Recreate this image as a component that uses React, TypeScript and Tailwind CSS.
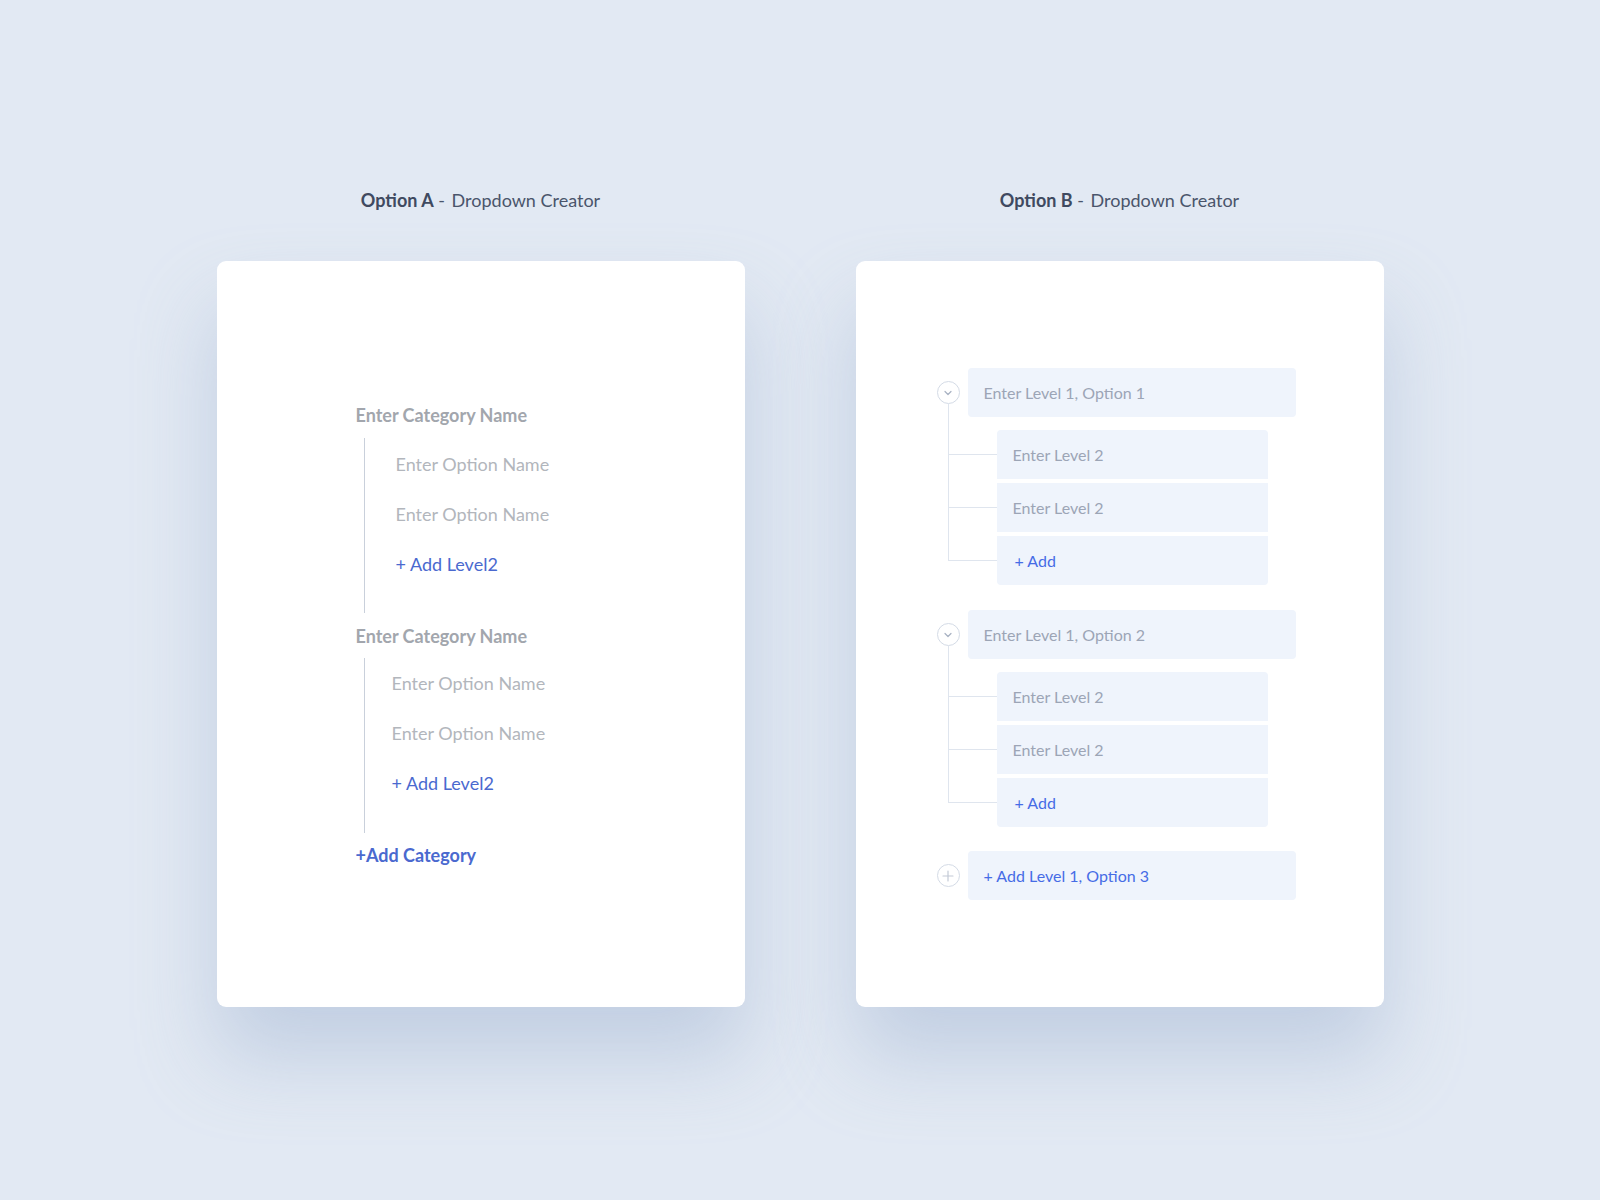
import React from "react";

const font = { fontFamily: "Lato, 'Open Sans', sans-serif" };

function Title({ label }: { label: string }) {
  return (
    <h2 className="h-[22px] text-[18px] leading-[22px] text-[#4a556b] whitespace-pre">
      <span className="font-bold text-[#3f4a60]">{label}</span>
      <span>{" - "}</span>
      <span className="pl-[2px]">Dropdown Creator</span>
    </h2>
  );
}

function Category({
  lineGap,
  padTop,
  indent,
}: {
  lineGap: string;
  padTop: string;
  indent: string;
}) {
  return (
    <div>
      <div className="h-[24px] text-[18px] font-bold leading-[24px] text-[#a2a6ad]">
        Enter Category Name
      </div>
      <div
        className={`ml-[8px] flex h-[175px] flex-col border-l border-[#c9d0db] ${lineGap} ${padTop} ${indent}`}
      >
        <div className="flex h-[50px] items-center text-[18px] text-[#b2b6bc]">Enter Option Name</div>
        <div className="flex h-[50px] items-center text-[18px] text-[#b2b6bc]">Enter Option Name</div>
        <div className="flex h-[50px] items-center text-[18px] text-[#4a69cf]">+ Add Level2</div>
      </div>
    </div>
  );
}

function Chevron() {
  return (
    <svg width="10" height="10" viewBox="0 0 10 10" fill="none">
      <path d="M2 3.5 L5 6.5 L8 3.5" stroke="#a7b1c2" strokeWidth="1.2" strokeLinecap="round" strokeLinejoin="round" />
    </svg>
  );
}

function Plus() {
  return (
    <svg width="12" height="12" viewBox="0 0 12 12" fill="none">
      <path d="M6 1 V11 M1 6 H11" stroke="#c3cad6" strokeWidth="1.2" strokeLinecap="round" />
    </svg>
  );
}

function Circle({ children }: { children: React.ReactNode }) {
  return (
    <div className="flex h-[23px] w-[23px] shrink-0 items-center justify-center rounded-full border border-[#d4dbe6] bg-white">
      {children}
    </div>
  );
}

function LevelOne({ option }: { option: number }) {
  return (
    <div className="relative">
      <div className="flex items-center gap-[8px]">
        <Circle>
          <Chevron />
        </Circle>
        <div className="flex h-[49px] w-[328px] items-center rounded-[4px] bg-[#eff4fc] pl-[16px] text-[16px] text-[#9ca5b6]">
          Enter Level 1, Option {option}
        </div>
      </div>
      {/* tree trunk from the toggle down to the last branch */}
      <div className="absolute left-[11px] top-[36px] bottom-[25px] w-px bg-[#dfe5ee]" />
      <div className="mt-[13px] flex flex-col gap-[4px]">
        <div className="flex items-center">
          <div className="ml-[11px] h-px w-[49px] bg-[#dfe5ee]" />
          <div className="flex h-[49px] w-[271px] items-center rounded-t-[4px] bg-[#eff4fc] pl-[16px] text-[16px] text-[#9ca5b6]">
            Enter Level 2
          </div>
        </div>
        <div className="flex items-center">
          <div className="ml-[11px] h-px w-[49px] bg-[#dfe5ee]" />
          <div className="flex h-[49px] w-[271px] items-center bg-[#eff4fc] pl-[16px] text-[16px] text-[#9ca5b6]">
            Enter Level 2
          </div>
        </div>
        <div className="flex items-center">
          <div className="ml-[11px] h-px w-[49px] bg-[#dfe5ee]" />
          <div className="flex h-[49px] w-[271px] items-center rounded-b-[4px] bg-[#eff4fc] pl-[18px] text-[16px] text-[#466ce6]">
            + Add
          </div>
        </div>
      </div>
    </div>
  );
}

export default function App() {
  return (
    <div className="min-h-[1200px] w-full bg-[#e2e9f3] pt-[189px]" style={font}>
      <div className="flex justify-center gap-[111px]">
        {/* Option A */}
        <div className="flex w-[528px] flex-col items-center">
          <Title label="Option A" />
          <div className="mt-[50px] h-[746px] w-[528px] rounded-[9px] bg-white pl-[139px] pt-[142px] shadow-[0_50px_80px_rgba(155,175,206,0.45)]">
            <Category lineGap="mt-[11px]" padTop="pt-[1px]" indent="pl-[31px]" />
            <div className="mt-[11px]">
              <Category lineGap="mt-[10px]" padTop="pt-[0px]" indent="pl-[27px]" />
            </div>
            <div className="mt-[10px] h-[24px] text-[18px] font-bold leading-[24px] text-[#4a69cf]">
              +Add Category
            </div>
          </div>
        </div>

        {/* Option B */}
        <div className="flex w-[528px] flex-col items-center">
          <Title label="Option B" />
          <div className="mt-[50px] h-[746px] w-[528px] rounded-[9px] bg-white pl-[81px] pt-[107px] shadow-[0_50px_80px_rgba(155,175,206,0.45)]">
            <LevelOne option={1} />
            <div className="mt-[25px]">
              <LevelOne option={2} />
            </div>
            <div className="mt-[24px] flex items-center gap-[8px]">
              <Circle>
                <Plus />
              </Circle>
              <div className="flex h-[49px] w-[328px] items-center rounded-[4px] bg-[#eff4fc] pl-[16px] text-[16px] text-[#466ce6]">
                + Add Level 1, Option 3
              </div>
            </div>
          </div>
        </div>
      </div>
    </div>
  );
}
